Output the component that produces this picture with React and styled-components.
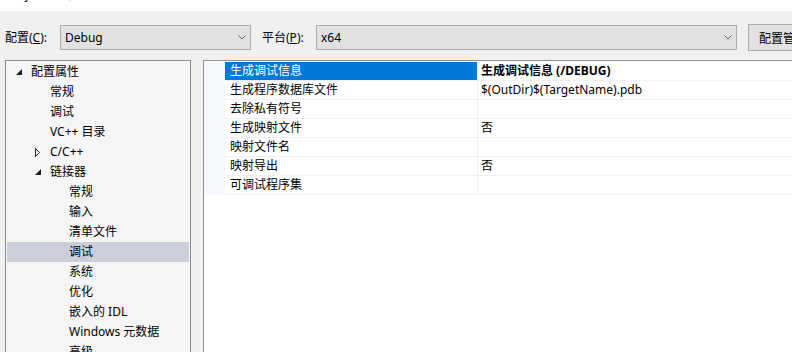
import React from 'react';
import styled, { createGlobalStyle } from 'styled-components';

const Global = createGlobalStyle`
  html, body { margin: 0; padding: 0; background: #f0f0f0; }
  body {
    font-family: "Noto Sans", "Noto Sans CJK SC", sans-serif;
    font-size: 12px;
    color: #000;
  }
`;

const Window = styled.div`
  width: 792px;
  height: 352px;
  overflow: hidden;
  display: flex;
  flex-direction: column;
  background: #f0f0f0;
`;

const TitleBar = styled.div`
  height: 11px;
  flex-shrink: 0;
  background: #fff;
  overflow: hidden;
`;

const TitleText = styled.div`
  margin-top: -13px;
  padding-left: 6px;
  line-height: 16px;
  white-space: nowrap;
`;

const Body = styled.div`
  display: flex;
  flex-direction: column;
  padding: 13px 0 0 5px;
`;

const Toolbar = styled.div`
  display: flex;
  align-items: center;
  height: 27px;
`;

const Label = styled.span`
  flex-shrink: 0;
  width: ${(p) => p.$width}px;
  white-space: nowrap;
  line-height: 16px;
`;

const Combo = styled.div`
  flex-shrink: 0;
  box-sizing: border-box;
  width: ${(p) => p.$width}px;
  height: 25px;
  margin-right: ${(p) => p.$gap}px;
  border: 1px solid #adadad;
  background: #e1e1e1;
  display: flex;
  align-items: center;
  justify-content: space-between;
  padding: 0 4px 0 4px;
`;

const ComboText = styled.span`
  line-height: 16px;
`;

const Button = styled.div`
  flex-shrink: 0;
  box-sizing: border-box;
  height: 27px;
  padding: 0 10px;
  border: 1px solid #adadad;
  background: #e1e1e1;
  display: flex;
  align-items: center;
  white-space: nowrap;
`;

const Content = styled.div`
  display: flex;
  gap: 12px;
  margin-top: 9px;
  height: 320px;
`;

const Tree = styled.div`
  flex-shrink: 0;
  box-sizing: border-box;
  width: 186px;
  border: 1px solid #8b8b90;
  background: #f5f5f5;
  padding: 1px;
`;

const TreeRow = styled.div`
  display: flex;
  align-items: center;
  height: 20px;
  padding-left: ${(p) => 9 + p.$level * 19}px;
  background: ${(p) => (p.$selected ? '#cccedb' : 'transparent')};
  white-space: nowrap;
`;

const Toggle = styled.span`
  width: 15px;
  flex-shrink: 0;
  display: flex;
  align-items: center;
`;

const TreeLabel = styled.span`
  line-height: 20px;
`;

const Grid = styled.div`
  flex: 1;
  margin-right: -10px;
  border: 1px solid #8f8f94;
  border-right: none;
  background: #fff;
  padding-top: 1px;
`;

const GridRow = styled.div`
  display: flex;
  height: 19px;
`;

const Strip = styled.div`
  width: 21px;
  flex-shrink: 0;
  background: #f4f7fb;
`;

const NameCell = styled.div`
  box-sizing: border-box;
  width: 253px;
  flex-shrink: 0;
  height: 19px;
  line-height: 18px;
  padding-left: 5px;
  border-right: 1px solid #eef0f4;
  border-bottom: 1px solid #eef0f4;
  background: ${(p) => (p.$selected ? '#0078d7' : '#fff')};
  color: ${(p) => (p.$selected ? '#fff' : '#000')};
  white-space: nowrap;
`;

const ValueCell = styled.div`
  box-sizing: border-box;
  flex: 1;
  height: 19px;
  line-height: 18px;
  padding-left: 3px;
  border-bottom: 1px solid #eef0f4;
  font-weight: ${(p) => (p.$bold ? 700 : 400)};
  white-space: nowrap;
`;

const Chevron = () => (
  <svg width="8" height="5" viewBox="0 0 8 5">
    <path d="M0.5 0.5 L4 4 L7.5 0.5" fill="none" stroke="#606060" strokeWidth="1" />
  </svg>
);

const Expanded = () => (
  <svg width="6" height="6" viewBox="0 0 6 6">
    <polygon points="6,0 6,6 0,6" fill="#1e1e1e" />
  </svg>
);

const Collapsed = () => (
  <svg width="6" height="9" viewBox="0 0 6 9">
    <polygon points="0.5,0.5 4.5,4.5 0.5,8.5" fill="none" stroke="#1e1e1e" strokeWidth="1" />
  </svg>
);

const treeItems = [
  { label: '配置属性', level: 0, toggle: 'open' },
  { label: '常规', level: 1 },
  { label: '调试', level: 1 },
  { label: 'VC++ 目录', level: 1 },
  { label: 'C/C++', level: 1, toggle: 'closed' },
  { label: '链接器', level: 1, toggle: 'open' },
  { label: '常规', level: 2 },
  { label: '输入', level: 2 },
  { label: '清单文件', level: 2 },
  { label: '调试', level: 2, selected: true },
  { label: '系统', level: 2 },
  { label: '优化', level: 2 },
  { label: '嵌入的 IDL', level: 2 },
  { label: 'Windows 元数据', level: 2 },
  { label: '高级', level: 2 },
  { label: '所有选项', level: 2 },
];

const props = [
  { name: '生成调试信息', value: '生成调试信息 (/DEBUG)', selected: true, bold: true },
  { name: '生成程序数据库文件', value: '$(OutDir)$(TargetName).pdb' },
  { name: '去除私有符号', value: '' },
  { name: '生成映射文件', value: '否' },
  { name: '映射文件名', value: '' },
  { name: '映射导出', value: '否' },
  { name: '可调试程序集', value: '' },
];

export default function App() {
  return (
    <>
      <Global />
      <Window>
        <TitleBar>
          <TitleText>Project1 属性页</TitleText>
        </TitleBar>
        <Body>
          <Toolbar>
            <Label $width={55}>
              配置(<u>C</u>):
            </Label>
            <Combo $width={191} $gap={11}>
              <ComboText>Debug</ComboText>
              <Chevron />
            </Combo>
            <Label $width={54}>
              平台(<u>P</u>):
            </Label>
            <Combo $width={421} $gap={11}>
              <ComboText>x64</ComboText>
              <Chevron />
            </Combo>
            <Button>
              配置管理器(<u>O</u>)...
            </Button>
          </Toolbar>
          <Content>
            <Tree>
              {treeItems.map((it, i) => (
                <TreeRow key={i} $level={it.level} $selected={it.selected}>
                  <Toggle>
                    {it.toggle === 'open' && <Expanded />}
                    {it.toggle === 'closed' && <Collapsed />}
                  </Toggle>
                  <TreeLabel>{it.label}</TreeLabel>
                </TreeRow>
              ))}
            </Tree>
            <Grid>
              {props.map((p, i) => (
                <GridRow key={i}>
                  <Strip />
                  <NameCell $selected={p.selected}>{p.name}</NameCell>
                  <ValueCell $bold={p.bold}>{p.value}</ValueCell>
                </GridRow>
              ))}
            </Grid>
          </Content>
        </Body>
      </Window>
    </>
  );
}
